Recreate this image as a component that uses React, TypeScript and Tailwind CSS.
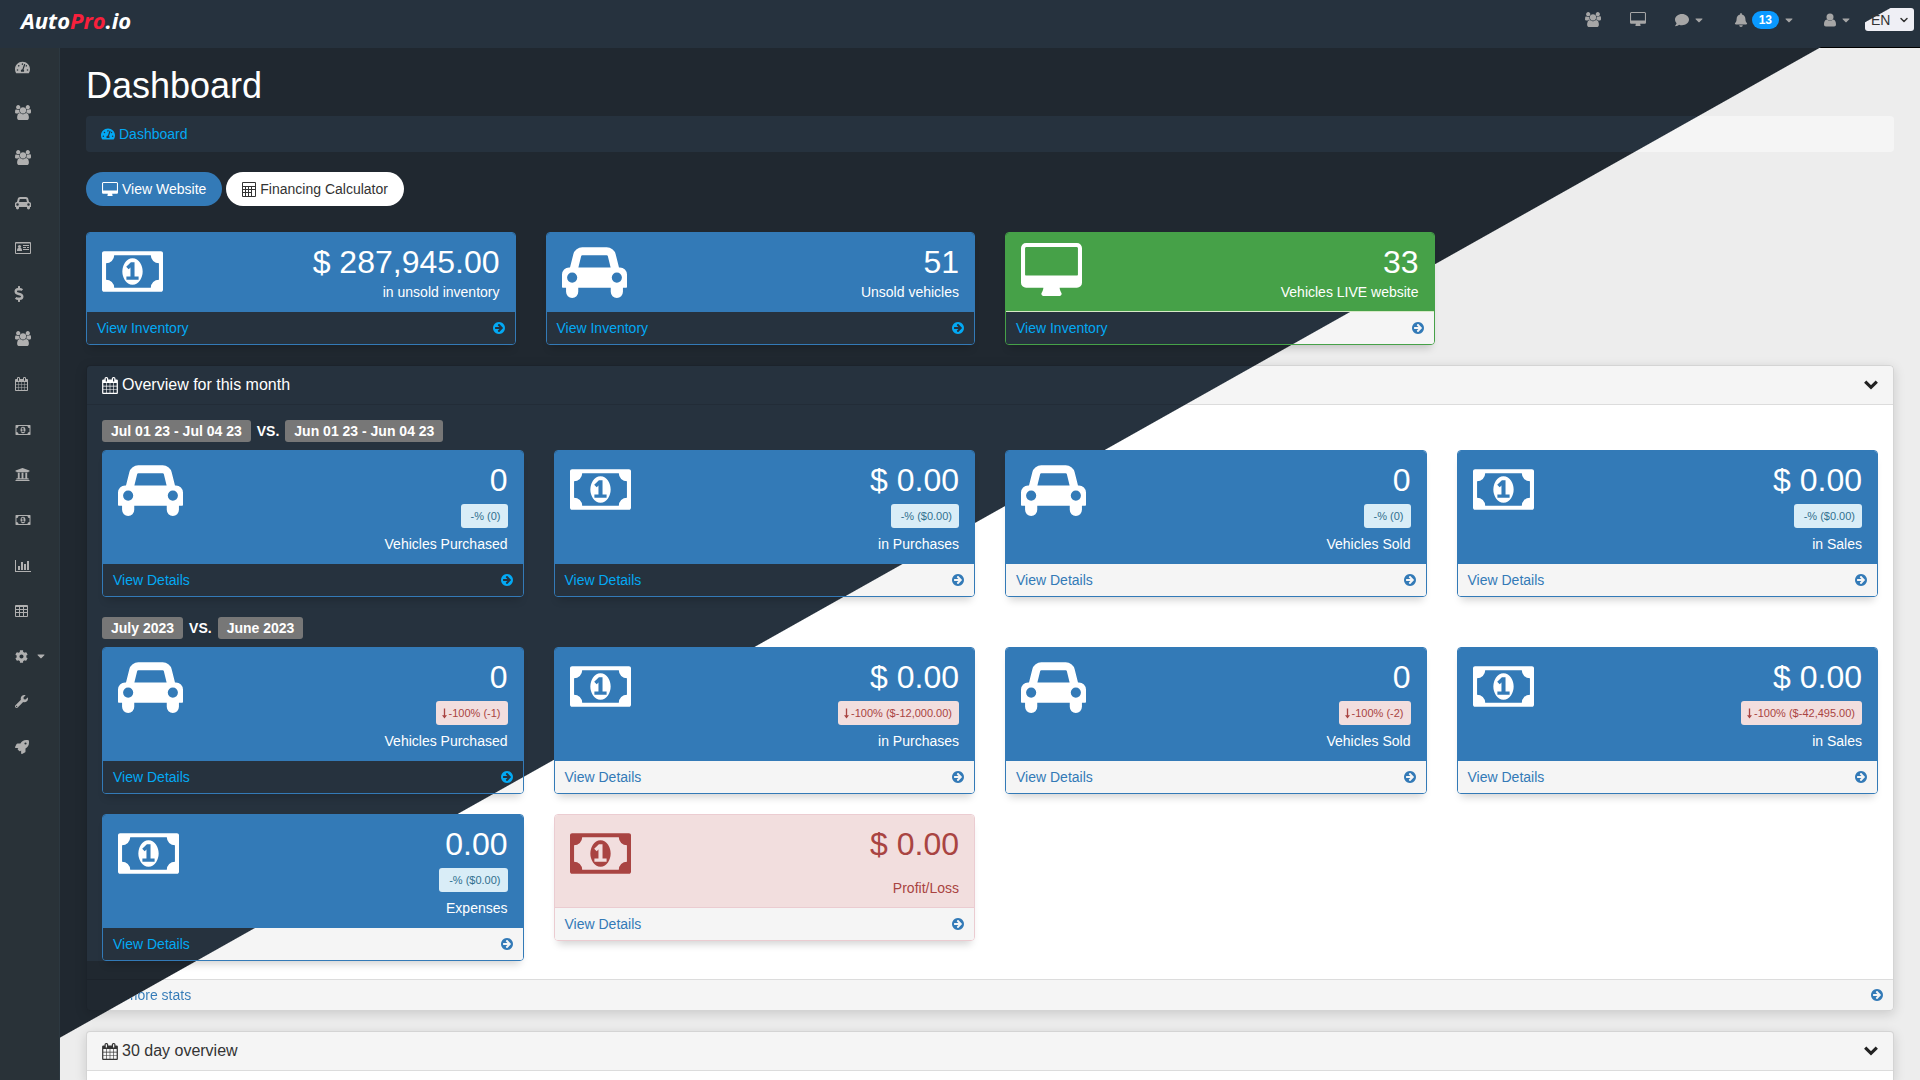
import type { ReactNode } from 'react';
import { ChevronDown } from 'lucide-react';
import {
  FaBell,
  FaCaretDown,
  FaCog,
  FaComment,
  FaDollarSign,
  FaRocket,
  FaTachometerAlt,
  FaUniversity,
  FaWrench,
} from 'react-icons/fa';

interface GlyphProps {
  className?: string;
}

// Split theme: fixed gradients share the viewport, so every surface breaks on the same diagonal
const PAGE_BG =
  'bg-fixed bg-[linear-gradient(to_bottom_right,#202830_calc(50%_-_8px),#ededed_calc(50%_-_7px))]';
const HEAD_BG =
  'bg-fixed bg-[linear-gradient(to_bottom_right,#26323e_calc(50%_-_8px),#f5f5f5_calc(50%_-_7px))]';
const BODY_BG =
  'bg-fixed bg-[linear-gradient(to_bottom_right,#26323e_calc(50%_-_8px),#ffffff_calc(50%_-_7px))]';
const BODY_END_BG =
  'bg-fixed bg-[linear-gradient(to_bottom_right,#202830_calc(50%_-_8px),#ffffff_calc(50%_-_7px))]';
const FOOT_BG =
  'bg-fixed bg-[linear-gradient(to_bottom_right,#202830_calc(50%_-_8px),#f5f5f5_calc(50%_-_7px))]';

function CarIcon({ className = '' }: GlyphProps) {
  return (
    <svg viewBox="0 0 2048 1792" fill="currentColor" className={className} aria-hidden="true">
      <path d="M480 1088q0-66-47-113t-113-47-113 47-47 113 47 113 113 47 113-47 47-113zm36-320h1016l-89-357q-2-8-14-17.500t-21-9.500h-768q-9 0-21 9.500t-14 17.500zm1372 320q0-66-47-113t-113-47-113 47-47 113 47 113 113 47 113-47 47-113zm160-96v384q0 14-9 23t-23 9h-96v128q0 80-56 136t-136 56-136-56-56-136v-128h-1024v128q0 80-56 136t-136 56-136-56-56-136v-128h-96q-14 0-23-9t-9-23v-384q0-93 65.500-158.500t158.500-65.500h28l105-419q23-94 104-157.500t179-63.500h768q98 0 179 63.500t104 157.500l105 419h28q93 0 158.500 65.500t65.500 158.500z" />
    </svg>
  );
}

function MoneyIcon({ className = '' }: GlyphProps) {
  return (
    <svg viewBox="0 0 1920 1792" fill="currentColor" className={className} aria-hidden="true">
      <path d="M768 1152h384v-96h-128v-448h-114l-148 137 77 80q42-37 55-57h2v288h-128v96zm512-256q0 70-21 142t-59.500 134-101.500 101-138 39-138-39-101.500-101-59.500-134-21-142 21-142 59.500-134 101.500-101 138-39 138 39 101.500 101 59.500 134 21 142zm512 256v-512q-106 0-181-75t-75-181h-1152q0 106-75 181t-181 75v512q106 0 181 75t75 181h1152q0-106 75-181t181-75zm128-832v1152q0 26-19 45t-45 19h-1792q-26 0-45-19t-19-45v-1152q0-26 19-45t45-19h1792q26 0 45 19t19 45z" />
    </svg>
  );
}

function DesktopIcon({ className = '' }: GlyphProps) {
  return (
    <svg viewBox="0 0 1920 1792" fill="currentColor" className={className} aria-hidden="true">
      <path d="M1792 992v-832q0-13-9.500-22.500t-22.500-9.500h-1600q-13 0-22.500 9.500t-9.500 22.500v832q0 13 9.500 22.500t22.500 9.500h1600q13 0 22.500-9.500t9.500-22.500zm128-832v1088q0 66-47 113t-113 47h-544q0 37 16 77.500t32 71 16 43.500q0 26-19 45t-45 19h-512q-26 0-45-19t-19-45q0-14 16-44t32-70 16-78h-544q-66 0-113-47t-47-113v-1088q0-66 47-113t113-47h1600q66 0 113 47t47 113z" />
    </svg>
  );
}

function UsersIcon({ className = '' }: GlyphProps) {
  return (
    <svg viewBox="64 0 1920 1792" fill="currentColor" className={className} aria-hidden="true">
      <path d="M657 896q-162 5-265 128h-134q-82 0-138-40.500t-56-118.500q0-353 124-353 6 0 43.500 21t97.500 42.500 119 21.500q67 0 133-23-5 37-5 66 0 159 90 288zm1071 637q0 120-73 189.500t-194 69.500h-874q-121 0-194-69.500t-73-189.500q0-53 3.500-103.500t14-109 26.500-108.500 43-97.500 62-81 85.500-53.500 111.500-20q10 0 43 21.500t73 48 107 48 135 21.500 135-21.500 107-48 73-48 43-21.500q61 0 111.500 20t85.500 53.500 62 81 43 97.500 26.500 108.500 14 109 3.500 103.500zm-1024-1277q0 106-75 181t-181 75-181-75-75-181 75-181 181-75 181 75 75 181zm704 384q0 159-112.500 271.500t-271.500 112.500-271.500-112.500-112.500-271.500 112.500-271.500 271.500-112.500 271.500 112.500 112.500 271.500zm576 225q0 78-56 118.500t-138 40.500h-134q-103-123-265-128 90-129 90-288 0-29-5-66 66 23 133 23 59 0 119-21.500t97.500-42.500 43.500-21q124 0 124 353zm-128-609q0 106-75 181t-181 75-181-75-75-181 75-181 181-75 181 75 75 181z" />
    </svg>
  );
}

function CalendarIcon({ className = '' }: GlyphProps) {
  return (
    <svg viewBox="64 0 1664 1792" fill="currentColor" className={className} aria-hidden="true">
      <path d="M192 1664h288v-288h-288v288zm352 0h320v-288h-320v288zm-352-352h288v-320h-288v320zm352 0h320v-320h-320v320zm-352-384h288v-288h-288v288zm736 736h320v-288h-320v288zm-384-736h320v-288h-320v288zm768 736h288v-288h-288v288zm-384-352h320v-320h-320v320zm-352-864v-288q0-13-9.500-22.500t-22.500-9.500h-64q-13 0-22.500 9.500t-9.500 22.500v288q0 13 9.500 22.500t22.500 9.500h64q13 0 22.500-9.500t9.500-22.500zm736 864h288v-320h-288v320zm-384-384h320v-288h-320v288zm384 0h288v-288h-288v288zm32-480v-288q0-13-9.500-22.500t-22.500-9.500h-64q-13 0-22.500 9.500t-9.500 22.500v288q0 13 9.500 22.500t22.500 9.500h64q13 0 22.500-9.500t9.500-22.500zm384-64v1280q0 52-38 90t-90 38h-1408q-52 0-90-38t-38-90v-1280q0-52 38-90t90-38h128v-96q0-66 47-113t113-47h64q66 0 113 47t47 113v96h384v-96q0-66 47-113t113-47h64q66 0 113 47t47 113v96h128q52 0 90 38t38 90z" />
    </svg>
  );
}

function ArrowCircleIcon({ className = '' }: GlyphProps) {
  return (
    <svg viewBox="128 128 1536 1536" fill="currentColor" className={className} aria-hidden="true">
      <path d="M1413 896q0-27-18-45l-91-91-362-362q-18-18-45-18t-45 18l-91 91q-18 18-18 45t18 45l189 189h-502q-26 0-45 19t-19 45v128q0 26 19 45t45 19h502l-189 189q-18 18-18 45t18 45l91 91q18 18 45 18t45-18l362-362 91-91q18-18 18-45zm251 0q0 209-103 385.500t-279.500 279.500-385.500 103-385.500-103-279.500-279.500-103-385.500 103-385.500 279.500-279.500 385.500-103 385.500 103 279.500 279.500 103 385.500z" />
    </svg>
  );
}

function BarChartIcon({ className = '' }: GlyphProps) {
  return (
    <svg viewBox="0 0 16 14" fill="currentColor" className={className} aria-hidden="true">
      <path d="M0 1h1v11h15v1H0zM3 7h2v4H3zM6 3h2v8H6zM9 5h2v6H9zM12 2h2v9h-2z" />
    </svg>
  );
}

function TableIcon({ className = '' }: GlyphProps) {
  return (
    <svg viewBox="0 0 13 12" fill="currentColor" className={className} aria-hidden="true">
      <path
        fillRule="evenodd"
        d="M1 0h11a1 1 0 0 1 1 1v10a1 1 0 0 1-1 1H1a1 1 0 0 1-1-1V1a1 1 0 0 1 1-1zM1 2v2h3V2zM5 2v2h3V2zM9 2v2h3V2zM1 5v2h3V5zM5 5v2h3V5zM9 5v2h3V5zM1 8v3h3V8zM5 8v3h3V8zM9 8v3h3V8z"
      />
    </svg>
  );
}

function AddressCardIcon({ className = '' }: GlyphProps) {
  return (
    <svg viewBox="0 0 16 12" fill="currentColor" className={className} aria-hidden="true">
      <path
        fillRule="evenodd"
        d="M1 0h14a1 1 0 0 1 1 1v10a1 1 0 0 1-1 1H1a1 1 0 0 1-1-1V1a1 1 0 0 1 1-1zM1 1.500v9.500h14V1.500zM8 3h6v1H8zM8 5h3v1H8zM12 5h2v1h-2zM8 7h6v1H8z"
      />
      <circle cx="4.500" cy="4.500" r="1.600" />
      <path d="M2 9c0-2 .5-3 1.300-3h2.400C6.500 6 7 7 7 9z" />
    </svg>
  );
}

function CalculatorIcon({ className = '' }: GlyphProps) {
  return (
    <svg viewBox="0 0 14 15" fill="currentColor" className={className} aria-hidden="true">
      <path
        fillRule="evenodd"
        d="M1 0h12a1 1 0 0 1 1 1v13a1 1 0 0 1-1 1H1a1 1 0 0 1-1-1V1a1 1 0 0 1 1-1zM1 1v3h12V1zM1 5v2h2V5zM4 5v2h2V5zM7 5v2h2V5zM10 5v2h3V5zM1 8v2h2V8zM4 8v2h2V8zM7 8v2h2V8zM10 8v6h3V8zM1 11v3h2v-3zM4 11v3h2v-3zM7 11v3h2v-3z"
      />
    </svg>
  );
}

function UserIcon({ className = '' }: GlyphProps) {
  return (
    <svg viewBox="0 0 12 14" fill="currentColor" className={className} aria-hidden="true">
      <circle cx="6" cy="4" r="3.500" />
      <path d="M3 6.500c1.700 1.700 4.300 1.700 6 0 2.300.3 3 2.500 3 5 0 1.200-.7 2-1.900 2H1.900C.7 13.500 0 12.700 0 11.500c0-2.500.7-4.700 3-5z" />
    </svg>
  );
}

function LongArrowDownIcon({ className = '' }: GlyphProps) {
  return (
    <svg viewBox="0 0 6 12" fill="currentColor" className={className} aria-hidden="true">
      <path d="M2.200 0h1.600v8H6l-3 4-3-4h2.200z" />
    </svg>
  );
}

function HeavyChevronIcon({ className = '' }: GlyphProps) {
  return (
    <svg viewBox="0 0 14 10" fill="none" stroke="currentColor" className={className} aria-hidden="true">
      <path d="M1.200 1.700 7 7.300l5.800-5.600" strokeWidth="3.200" />
    </svg>
  );
}

interface Delta {
  text: string;
  down?: boolean;
}

interface Stat {
  icon: 'car' | 'money' | 'desktop';
  value: string;
  label: string;
  delta?: Delta;
  tone?: 'primary' | 'green' | 'danger';
  link?: string;
  darkLink?: boolean;
  darkArrow?: boolean;
}

const summary: Stat[] = [
  { icon: 'money', value: '$ 287,945.00', label: 'in unsold inventory', link: 'View Inventory', darkLink: true, darkArrow: true },
  { icon: 'car', value: '51', label: 'Unsold vehicles', link: 'View Inventory', darkLink: true, darkArrow: true },
  { icon: 'desktop', value: '33', label: 'Vehicles LIVE website', link: 'View Inventory', tone: 'green', darkLink: true },
];

const monthToDate: Stat[] = [
  { icon: 'car', value: '0', label: 'Vehicles Purchased', delta: { text: '-% (0)' }, darkLink: true, darkArrow: true },
  { icon: 'money', value: '$ 0.00', label: 'in Purchases', delta: { text: '-% ($0.00)' }, darkLink: true },
  { icon: 'car', value: '0', label: 'Vehicles Sold', delta: { text: '-% (0)' } },
  { icon: 'money', value: '$ 0.00', label: 'in Sales', delta: { text: '-% ($0.00)' } },
];

const fullMonth: Stat[] = [
  { icon: 'car', value: '0', label: 'Vehicles Purchased', delta: { text: '-100% (-1)', down: true }, darkLink: true, darkArrow: true },
  { icon: 'money', value: '$ 0.00', label: 'in Purchases', delta: { text: '-100% ($-12,000.00)', down: true } },
  { icon: 'car', value: '0', label: 'Vehicles Sold', delta: { text: '-100% (-2)', down: true } },
  { icon: 'money', value: '$ 0.00', label: 'in Sales', delta: { text: '-100% ($-42,495.00)', down: true } },
  { icon: 'money', value: '0.00', label: 'Expenses', delta: { text: '-% ($0.00)' }, darkLink: true },
  { icon: 'money', value: '$ 0.00', label: 'Profit/Loss', tone: 'danger' },
];

const tones = {
  primary: { border: 'border-[#337ab7]', head: 'pb-2.5 bg-[#337ab7] text-white' },
  green: { border: 'border-[#46a148]', head: 'pb-[9px] bg-[#46a148] text-white border-b border-[#d6e9c6]' },
  danger: { border: 'border-[#ebccd1]', head: 'pb-[9px] bg-[#f2dede] text-[#a94442] border-b border-[#ebccd1]' },
};

function DeltaBadge({ delta }: { delta: Delta }) {
  return (
    <span
      className={`mt-1 mb-1.5 flex h-6 items-center rounded-[3px] pr-[7px] text-[11px] ${
        delta.down ? 'bg-[#f2dede] pl-1.5 text-[#a94442]' : 'bg-[#d9edf7] pl-2.5 text-[#31708f]'
      }`}
    >
      {delta.down && <LongArrowDownIcon className="mr-0.5 h-[11px] w-[5px]" />}
      {delta.text}
    </span>
  );
}

function StatCard({ stat }: { stat: Stat }) {
  const tone = tones[stat.tone ?? 'primary'];

  return (
    <div className={`self-start overflow-hidden rounded border shadow-[0_7px_8px_-4px_rgba(0,0,0,0.18)] ${tone.border}`}>
      <div className={`flex justify-between px-[15px] pt-2.5 ${tone.head}`}>
        {stat.icon === 'car' && <CarIcon className="h-[57px] w-[65px]" />}
        {stat.icon === 'money' && <MoneyIcon className="h-[57px] w-[61px]" />}
        {stat.icon === 'desktop' && <DesktopIcon className="h-[57px] w-[61px]" />}
        <div className="flex flex-col items-end">
          <div className="text-[32px] leading-[39px]">{stat.value}</div>
          {stat.delta && <DeltaBadge delta={stat.delta} />}
          <div className={stat.tone === 'danger' ? 'mt-3.5' : ''}>{stat.label}</div>
        </div>
      </div>
      <a href="#" className={`flex items-center justify-between px-2.5 py-1.5 ${HEAD_BG}`}>
        <span className={stat.darkLink ? 'text-[#03a9f4]' : 'text-[#337ab7]'}>{stat.link ?? 'View Details'}</span>
        <ArrowCircleIcon className={`size-3 ${stat.darkArrow ? 'text-[#03a9f4]' : 'text-[#337ab7]'}`} />
      </a>
    </div>
  );
}

function PeriodRow({ current, previous }: { current: string; previous: string }) {
  return (
    <div className="mb-2 flex items-center gap-1.5 font-bold text-white">
      <span className="rounded-[3px] bg-[#777777] px-[9px] py-px">{current}</span>
      <span>VS.</span>
      <span className="rounded-[3px] bg-[#777777] px-[9px] py-px">{previous}</span>
    </div>
  );
}

function PanelHeading({ title, className = '' }: { title: string; className?: string }) {
  return (
    <div className={`flex items-center justify-between rounded-t border-b border-black/10 px-[15px] py-2.5 ${HEAD_BG}`}>
      <h3 className={`flex items-center gap-1 text-base leading-[18px] ${className}`}>
        <CalendarIcon className="h-[17px] w-4" />
        {title}
      </h3>
      <button type="button" aria-label={`Toggle ${title}`} className="text-[#222222]">
        <HeavyChevronIcon className="h-2.5 w-3.5" />
      </button>
    </div>
  );
}

const sidebarIcons: { name: string; icon: ReactNode; menu?: boolean }[] = [
  { name: 'Dashboard', icon: <FaTachometerAlt className="size-[15px]" /> },
  { name: 'Customers', icon: <UsersIcon className="h-[15px] w-4" /> },
  { name: 'Leads', icon: <UsersIcon className="h-[15px] w-4" /> },
  { name: 'Inventory', icon: <CarIcon className="h-3.5 w-4" /> },
  { name: 'Contacts', icon: <AddressCardIcon className="h-3 w-4" /> },
  { name: 'Sales', icon: <FaDollarSign className="-ml-1 size-4" /> },
  { name: 'Staff', icon: <UsersIcon className="h-[15px] w-4" /> },
  { name: 'Calendar', icon: <CalendarIcon className="h-3.5 w-[13px]" /> },
  { name: 'Payments', icon: <MoneyIcon className="h-3.5 w-4" /> },
  { name: 'Bank', icon: <FaUniversity className="size-[15px]" /> },
  { name: 'Expenses', icon: <MoneyIcon className="h-3.5 w-4" /> },
  { name: 'Reports', icon: <BarChartIcon className="h-3.5 w-4" /> },
  { name: 'Tables', icon: <TableIcon className="h-3 w-[13px]" /> },
  { name: 'Settings', icon: <FaCog className="size-[13px]" />, menu: true },
  { name: 'Tools', icon: <FaWrench className="size-[13px]" /> },
  { name: 'Launch', icon: <FaRocket className="size-[14px]" /> },
];

function TopBar() {
  return (
    <header className="flex h-12 flex-col bg-[#26323e]">
      <div className="flex grow items-center justify-between pr-1.5 pb-2 pl-[21px]">
        <a href="#" className="font-['Open_Sans',sans-serif] text-[22px] leading-6 font-bold text-white italic">
          Auto<span className="text-[#f8203c]">Pro</span>.io
        </a>
        <div className="flex items-center gap-[13px] text-[#a6a6a6]">
          <div className="flex items-center gap-[29px]">
            <button type="button" aria-label="Users">
              <UsersIcon className="h-[15px] w-4" />
            </button>
            <button type="button" aria-label="Website">
              <DesktopIcon className="h-[15px] w-4" />
            </button>
            <button type="button" aria-label="Messages" className="flex items-center gap-1">
              <FaComment className="size-[14px]" />
              <FaCaretDown className="size-3" />
            </button>
            <button type="button" aria-label="Notifications" className="flex items-center gap-1">
              <FaBell className="size-[14px]" />
              <span className="rounded-full bg-[#0a99ff] px-[7px] text-xs leading-[18px] font-bold text-white">13</span>
              <FaCaretDown className="size-3" />
            </button>
            <button type="button" aria-label="Account" className="flex items-center gap-1">
              <UserIcon className="h-[14px] w-3" />
              <FaCaretDown className="size-3" />
            </button>
          </div>
          <div className="relative">
            <select
              aria-label="Language"
              className="block h-[23px] w-[49px] appearance-none rounded-[3px] bg-[linear-gradient(to_bottom_right,#26323e_calc(50%_-_8px),#efeff5_calc(50%_-_7px))] bg-fixed pl-1.5 text-sm leading-5 text-[#333333]"
            >
              <option>EN</option>
            </select>
            <ChevronDown className="pointer-events-none absolute top-1.5 right-1 size-3 stroke-3 text-[#333333]" />
          </div>
        </div>
      </div>
      <div className="h-px bg-[linear-gradient(to_bottom_right,#26323e_calc(50%_-_8px),#000000_calc(50%_-_7px))] bg-fixed" />
    </header>
  );
}

function Sidebar() {
  return (
    <nav className="w-[60px] shrink-0 border-r border-[#2c3840] bg-[#293238] pt-[9px] pl-[15px] text-[#b0b0b0]">
      <ul className="flex h-[700px] flex-col justify-between">
        {sidebarIcons.map(({ name, icon, menu }) => (
          <li key={name}>
            <a href="#" aria-label={name} className="flex h-5 items-center gap-[7px]">
              {icon}
              {menu && <FaCaretDown className="size-3" />}
            </a>
          </li>
        ))}
      </ul>
    </nav>
  );
}

export default function App() {
  return (
    <div className="flex min-h-screen flex-col font-['Liberation_Sans',Arial,sans-serif] text-sm leading-5">
      <TopBar />
      <div className="flex grow">
        <Sidebar />
        <main className={`flex grow flex-col px-[26px] pt-[18px] ${PAGE_BG}`}>
          <h1 className="mb-2.5 text-4xl leading-10 text-white">Dashboard</h1>

          <div className={`mb-5 rounded px-[15px] py-2 ${HEAD_BG}`}>
            <a href="#" className="flex items-center gap-1 text-[#03a9f4]">
              <FaTachometerAlt className="size-[14px]" />
              Dashboard
            </a>
          </div>

          <div className="mb-[26px] flex gap-1">
            <button type="button" className="flex items-center gap-1 rounded-full bg-[#337ab7] px-4 py-[7px] text-white">
              <DesktopIcon className="h-[15px] w-4" />
              View Website
            </button>
            <button type="button" className="flex items-center gap-1 rounded-full bg-white px-4 py-[7px] text-[#333333]">
              <CalculatorIcon className="h-[15px] w-[14px]" />
              Financing Calculator
            </button>
          </div>

          <div className="mb-5 grid grid-cols-4 gap-[30px]">
            {summary.map((stat) => (
              <StatCard key={stat.label} stat={stat} />
            ))}
          </div>

          <section className="mb-5 rounded border border-black/10 shadow-[0_3px_12px_rgba(0,0,0,0.15)]">
            <PanelHeading title="Overview for this month" className="text-white" />
            <div className={`px-[15px] pt-[15px] ${BODY_BG}`}>
              <PeriodRow current="Jul 01 23 - Jul 04 23" previous="Jun 01 23 - Jun 04 23" />
              <div className="mb-5 grid grid-cols-4 gap-[30px]">
                {monthToDate.map((stat) => (
                  <StatCard key={stat.label} stat={stat} />
                ))}
              </div>
              <PeriodRow current="July 2023" previous="June 2023" />
              <div className="grid grid-cols-4 gap-x-[30px] gap-y-5">
                {fullMonth.map((stat) => (
                  <StatCard key={stat.label} stat={stat} />
                ))}
              </div>
            </div>
            <div className={`h-[18px] ${BODY_END_BG}`} />
            <a
              href="#"
              className={`flex items-center justify-between rounded-b border-t border-black/10 px-2.5 py-[5px] text-[#337ab7] ${FOOT_BG}`}
            >
              <span className="bg-[linear-gradient(to_bottom_right,transparent_calc(50%_-_8px),#337ab7_calc(50%_-_7px))] bg-fixed bg-clip-text text-transparent">
                See more stats
              </span>
              <ArrowCircleIcon className="size-3" />
            </a>
          </section>

          <section className="flex grow flex-col rounded-t border border-b-0 border-black/10 shadow-[0_3px_12px_rgba(0,0,0,0.15)]">
            <PanelHeading title="30 day overview" className="text-[#333333]" />
            <div className="grow bg-white" />
          </section>
        </main>
      </div>
    </div>
  );
}
